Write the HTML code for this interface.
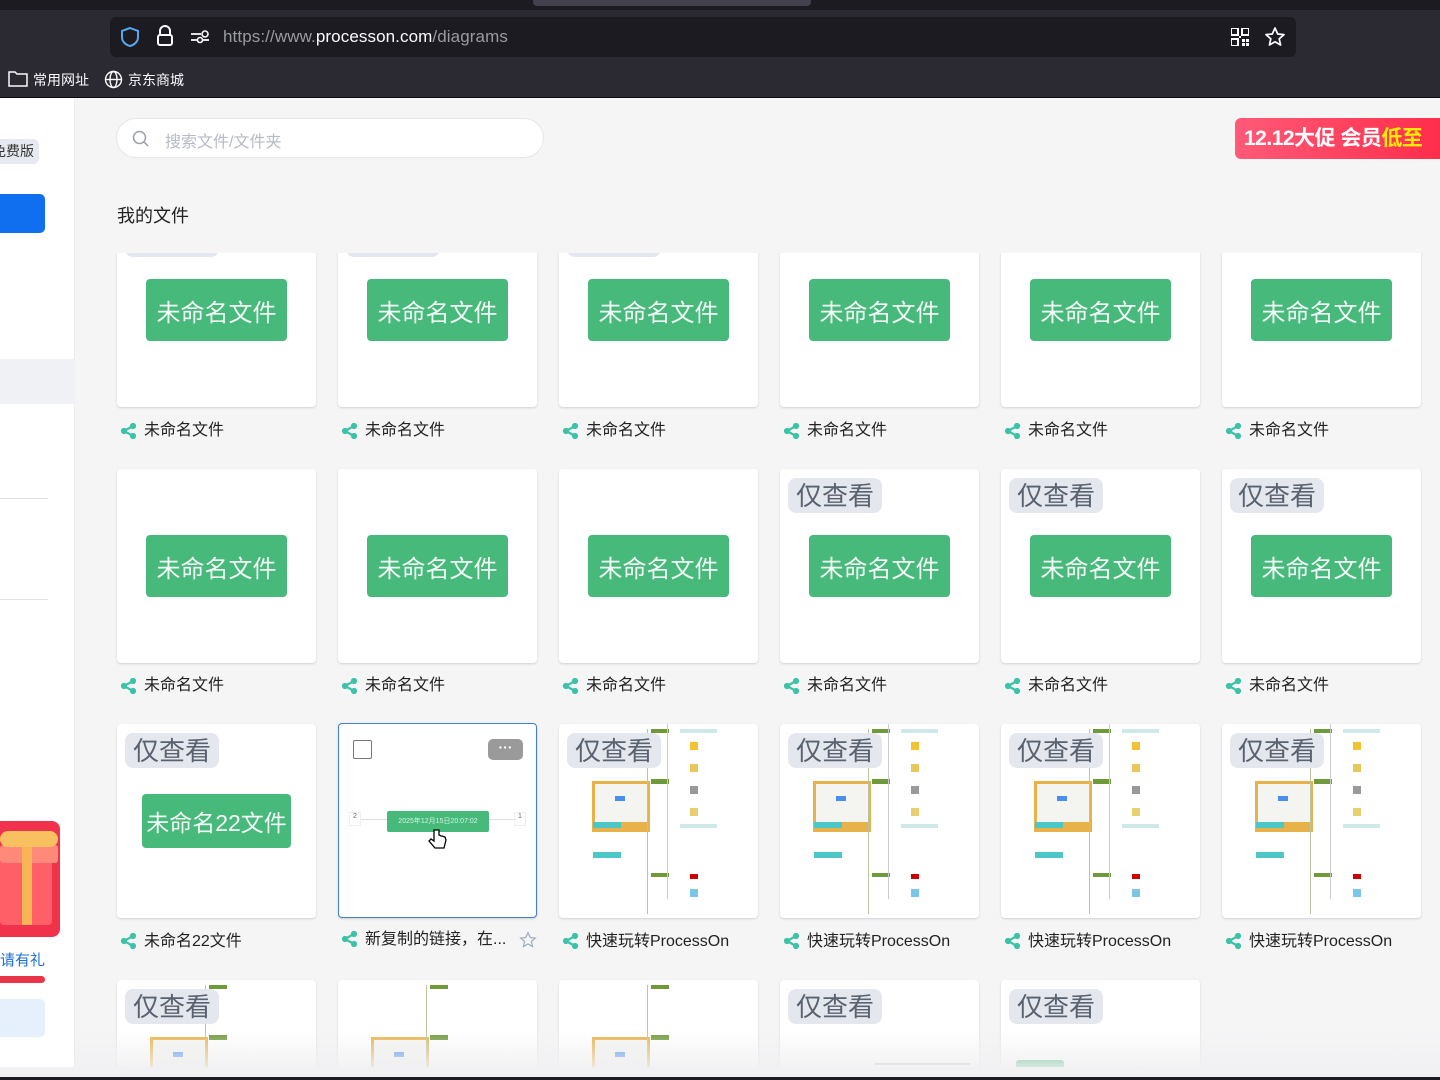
<!DOCTYPE html>
<html><head><meta charset="utf-8">
<style>
*{margin:0;padding:0;box-sizing:border-box}
html,body{width:1440px;height:1080px;overflow:hidden}
body{background:#f5f5f6;font-family:"Liberation Sans","Noto Sans CJK SC",sans-serif;position:relative}
.abs{position:absolute}
.chrome{left:0;top:0;width:1440px;height:98px;background:#2b2a33}
.tabs{left:0;top:0;width:1440px;height:10px;background:#1c1b22}
.tabact{left:533px;top:0;width:278px;height:6px;background:#42414d;border-radius:0 0 4px 4px}
.url{left:110px;top:17px;width:1186px;height:40px;background:#1c1b22;border-radius:6px}
.urltxt{left:223px;top:27px;font-size:17px;color:#9a9aa2;letter-spacing:.1px}
.urltxt b{font-weight:normal;color:#fbfbfe}
.bm{top:70px;font-size:14px;color:#fbfbfe}
.sep{left:0;top:97px;width:1440px;height:1px;background:#0c0c0d}
.side{left:0;top:98px;width:75px;height:982px;background:#fff;border-right:1px solid #ececef}
.card{position:absolute;width:199px;height:194px;background:#fff;border-radius:4px;box-shadow:0 1px 2px rgba(0,0,0,.15);overflow:hidden}
.btn{position:absolute;left:29px;top:66px;width:141px;height:62px;background:#47b97b;border-radius:4px;font-size:24px;text-align:center;line-height:70px;color:#f2fbf6}
.tag{position:absolute;z-index:3;left:8px;top:9px;width:94px;height:35px;background:#e4e8ee;border-radius:8px;color:#5a6270;font-size:26px;text-align:center;line-height:37px}
.lbl{position:absolute;font-size:16px;color:#222;height:20px;line-height:20px}
.grid{left:100px;top:253px;width:1340px;height:814px;overflow:hidden}
.mm::before{content:"";position:absolute;left:33px;top:57px;width:52px;height:38px;background:#f4f4f0 linear-gradient(#4a8ef0,#4a8ef0) 20px 12px/10px 5px no-repeat;border:3px solid #e8b24a;border-bottom-width:10px}
.mm::after{content:"";position:absolute;left:88px;top:5px;width:22px;height:185px;border-left:1px solid #b9c5a0;background:linear-gradient(#6f9a3a,#6f9a3a) 3px 0/18px 4px no-repeat,linear-gradient(#6f9a3a,#6f9a3a) 3px 50px/18px 5px no-repeat,linear-gradient(#6f9a3a,#6f9a3a) 3px 144px/18px 4px no-repeat}
.mmx{position:absolute;left:108px;top:15px;width:50px;height:175px;border-left:1px solid #ccc;background:
linear-gradient(#f2c230,#f2c230) 22px 18px/8px 8px no-repeat,
linear-gradient(#e8c85a,#e8c85a) 22px 40px/8px 8px no-repeat,
linear-gradient(#999,#999) 22px 62px/8px 8px no-repeat,
linear-gradient(#e8d070,#e8d070) 22px 84px/8px 8px no-repeat,
linear-gradient(#c00,#c00) 22px 150px/8px 5px no-repeat,
linear-gradient(#7bc5e8,#7bc5e8) 22px 165px/8px 8px no-repeat,
linear-gradient(#cfe8ea,#cfe8ea) 12px 5px/38px 4px no-repeat,
linear-gradient(#cfe8ea,#cfe8ea) 12px 100px/38px 4px no-repeat;}
</style></head><body>
<div class="abs chrome"></div>
<div class="abs tabs"></div>
<div class="abs tabact"></div>
<div class="abs url"></div>
<svg class="abs" style="left:119px;top:26px" width="22" height="22" viewBox="0 0 22 22"><path d="M11 2 L19 5 V11 C19 16 15 19 11 20 C7 19 3 16 3 11 V5 Z" fill="none" stroke="#56a9f0" stroke-width="2"/></svg>
<svg class="abs" style="left:156px;top:25px" width="18" height="22" viewBox="0 0 18 22"><path d="M4 10 V6 a5 5 0 0 1 10 0 V10" fill="none" stroke="#fbfbfe" stroke-width="2"/><rect x="2" y="10" width="14" height="10" rx="2" fill="none" stroke="#fbfbfe" stroke-width="2"/></svg>
<svg class="abs" style="left:190px;top:29px" width="20" height="16" viewBox="0 0 20 16"><path d="M1 5h10M1 11h6" stroke="#fbfbfe" stroke-width="1.8"/><circle cx="15" cy="5" r="3" fill="none" stroke="#fbfbfe" stroke-width="1.6"/><circle cx="10" cy="11" r="2.5" fill="none" stroke="#fbfbfe" stroke-width="1.6"/><path d="M13 11h6" stroke="#fbfbfe" stroke-width="1.8"/></svg>
<div class="abs urltxt">https://www.<b>processon.com</b>/diagrams</div>
<svg class="abs" style="left:1231px;top:28px" width="18" height="18" viewBox="0 0 18 18" fill="#fbfbfe"><rect x="0" y="0" width="7" height="7" fill="none" stroke="#fbfbfe" stroke-width="2"/><rect x="11" y="0" width="7" height="7" fill="none" stroke="#fbfbfe" stroke-width="2"/><rect x="0" y="11" width="7" height="7" fill="none" stroke="#fbfbfe" stroke-width="2"/><rect x="11" y="11" width="3" height="3"/><rect x="15" y="15" width="3" height="3"/><rect x="11" y="15" width="3" height="3"/><rect x="15" y="11" width="3" height="3"/><rect x="8" y="8" width="2" height="2"/></svg>
<svg class="abs" style="left:1264px;top:26px" width="22" height="22" viewBox="0 0 22 22"><path d="M11 2 L13.7 8 L20 8.6 L15.2 12.8 L16.6 19 L11 15.8 L5.4 19 L6.8 12.8 L2 8.6 L8.3 8 Z" fill="none" stroke="#fbfbfe" stroke-width="1.7" stroke-linejoin="round"/></svg>
<svg class="abs" style="left:8px;top:70px" width="20" height="17" viewBox="0 0 20 17"><path d="M1 2h6l2 2h10v12H1z" fill="none" stroke="#fbfbfe" stroke-width="1.5"/></svg>
<div class="abs bm" style="left:33px">常用网址</div>
<svg class="abs" style="left:104px;top:70px" width="19" height="19" viewBox="0 0 19 19" fill="none" stroke="#fbfbfe" stroke-width="1.4"><circle cx="9.5" cy="9.5" r="8"/><ellipse cx="9.5" cy="9.5" rx="3.5" ry="8"/><path d="M1.5 9.5h16"/></svg>
<div class="abs bm" style="left:128px">京东商城</div>
<div class="abs sep"></div>

<div class="abs side"></div>
<div class="abs" style="left:-10px;top:139px;width:49px;height:25px;background:#e6eaf0;border-radius:6px;font-size:14px;color:#333;line-height:25px;text-align:right;padding-right:5px">免费版</div>
<div class="abs" style="left:0;top:194px;width:45px;height:39px;background:#0f6fef;border-radius:0 5px 5px 0"></div>
<div class="abs" style="left:0;top:359px;width:75px;height:45px;background:#f0f1f4"></div>
<div class="abs" style="left:0;top:498px;width:48px;height:1px;background:#e2e2e6"></div>
<div class="abs" style="left:0;top:599px;width:48px;height:1px;background:#e2e2e6"></div>
<div class="abs" style="left:0;top:821px;width:60px;height:116px;background:#f0324d;border-radius:0 8px 8px 0;overflow:hidden">
<div class="abs" style="left:0;top:38px;width:52px;height:66px;background:#ff6068;border-radius:4px"></div>
<div class="abs" style="left:0;top:24px;width:58px;height:18px;background:#ff8a7a;border-radius:3px"></div>
<div class="abs" style="left:22px;top:24px;width:10px;height:80px;background:#f7b555"></div>
<div class="abs" style="left:0;top:10px;width:58px;height:16px;background:#f9c060;border-radius:8px"></div>
</div>
<div class="abs" style="left:0;top:949px;font-size:15px;color:#1a6fd8">请有礼</div>
<div class="abs" style="left:0;top:976px;width:45px;height:7px;background:#e8354a;border-radius:0 4px 4px 0"></div>
<div class="abs" style="left:0;top:999px;width:45px;height:38px;background:#e5f0fc;border-radius:0 5px 5px 0"></div>

<div class="abs" style="left:116px;top:118px;width:428px;height:40px;background:#fff;border:1px solid #e6e6ea;border-radius:20px"></div>
<svg class="abs" style="left:132px;top:130px" width="17" height="17" viewBox="0 0 17 17" fill="none" stroke="#9aa0a8" stroke-width="1.5"><circle cx="7.5" cy="7.5" r="6"/><path d="M12 12l4 4"/></svg>
<div class="abs" style="left:165px;top:128px;font-size:16px;color:#b6bac4">搜索文件/文件夹</div>
<div class="abs" style="left:1235px;top:118px;width:220px;height:41px;background:linear-gradient(90deg,#ff5a78,#ff2a48);border-radius:6px;color:#fff;font-size:21px;font-weight:bold;line-height:41px;padding-left:9px;white-space:nowrap;letter-spacing:-0.5px">12.12大促 会员<span style="color:#ffec00">低至</span></div>
<div class="abs" style="left:117px;top:202px;font-size:18px;color:#222">我的文件</div>

<div class="abs grid">
<div class="card" style="left:17px;top:-40px"><div class="tag"></div><div class="btn">未命名文件</div></div>
<div class="card" style="left:238px;top:-40px"><div class="tag"></div><div class="btn">未命名文件</div></div>
<div class="card" style="left:459px;top:-40px"><div class="tag"></div><div class="btn">未命名文件</div></div>
<div class="card" style="left:680px;top:-40px"><div class="btn">未命名文件</div></div>
<div class="card" style="left:901px;top:-40px"><div class="btn">未命名文件</div></div>
<div class="card" style="left:1122px;top:-40px"><div class="btn">未命名文件</div></div>
<div class="card" style="left:17px;top:216px"><div class="btn">未命名文件</div></div>
<div class="card" style="left:238px;top:216px"><div class="btn">未命名文件</div></div>
<div class="card" style="left:459px;top:216px"><div class="btn">未命名文件</div></div>
<div class="card" style="left:680px;top:216px"><div class="tag">仅查看</div><div class="btn">未命名文件</div></div>
<div class="card" style="left:901px;top:216px"><div class="tag">仅查看</div><div class="btn">未命名文件</div></div>
<div class="card" style="left:1122px;top:216px"><div class="tag">仅查看</div><div class="btn">未命名文件</div></div>
<div class="card" style="left:17px;top:471px"><div class="tag">仅查看</div><div class="btn" style="left:25px;top:70px;width:149px;height:54px;line-height:58px;font-size:23px">未命名22文件</div></div>
<div class="card" style="left:238px;top:470px;height:195px;border:1.5px solid #3f7fd6">
<div class="abs" style="left:14px;top:16px;width:19px;height:19px;border:1.5px solid #777;border-radius:2px"></div>
<div class="abs" style="left:149px;top:15px;width:35px;height:21px;background:#9a9a9a;border-radius:5px;color:#fff;font-size:14px;line-height:16px;text-align:center;font-weight:bold">···</div>
<div class="abs" style="left:10px;top:88px;width:12px;height:14px;border:1px solid #eee;font-size:7px;color:#666;text-align:center">2</div>
<div class="abs" style="left:22px;top:95px;width:155px;height:1px;background:#ddd"></div>
<div class="abs" style="left:48px;top:87px;width:102px;height:21px;background:#47b97b;border-radius:2px;color:#d8f2e4;font-size:7px;line-height:21px;text-align:center">2025年12月15日20:07:02</div>
<div class="abs" style="left:175px;top:88px;width:12px;height:14px;border:1px solid #eee;font-size:7px;color:#666;text-align:center">1</div>
<svg class="abs" style="left:89px;top:104px" width="20" height="22" viewBox="0 0 20 22"><path d="M6 2v11l-3-2-2 2 6 7h9l2-8-1-3-3-1-1 0-2-1V2z" fill="#fff" stroke="#000" stroke-width="1.3"/></svg>
</div>
<div class="card mm" style="left:459px;top:471px"><div class="tag">仅查看</div></div>
<div class="card mm" style="left:680px;top:471px"><div class="tag">仅查看</div></div>
<div class="card mm" style="left:901px;top:471px"><div class="tag">仅查看</div></div>
<div class="card mm" style="left:1122px;top:471px"><div class="tag">仅查看</div></div>
<div class="card mm" style="left:17px;top:727px"><div class="tag">仅查看</div></div>
<div class="card mm" style="left:238px;top:727px"></div>
<div class="card mm" style="left:459px;top:727px"></div>
<div class="card" style="left:680px;top:727px"><div class="tag">仅查看</div><div class="abs" style="left:95px;top:83px;width:95px;height:2px;background:#bbb"></div></div>
<div class="card" style="left:901px;top:727px"><div class="tag">仅查看</div><div class="abs" style="left:15px;top:80px;width:48px;height:10px;background:#47b97b;border-radius:3px"></div></div>
</div>

<div class="lbl" style="left:144px;top:421px">未命名文件</div>
<div class="lbl" style="left:365px;top:421px">未命名文件</div>
<div class="lbl" style="left:586px;top:421px">未命名文件</div>
<div class="lbl" style="left:807px;top:421px">未命名文件</div>
<div class="lbl" style="left:1028px;top:421px">未命名文件</div>
<div class="lbl" style="left:1249px;top:421px">未命名文件</div>
<div class="lbl" style="left:144px;top:676px">未命名文件</div>
<div class="lbl" style="left:365px;top:676px">未命名文件</div>
<div class="lbl" style="left:586px;top:676px">未命名文件</div>
<div class="lbl" style="left:807px;top:676px">未命名文件</div>
<div class="lbl" style="left:1028px;top:676px">未命名文件</div>
<div class="lbl" style="left:1249px;top:676px">未命名文件</div>
<div class="lbl" style="left:144px;top:932px">未命名22文件</div>
<div class="lbl" style="left:365px;top:930px">新复制的链接，在...</div>
<div class="lbl" style="left:586px;top:932px">快速玩转ProcessOn</div>
<div class="lbl" style="left:807px;top:932px">快速玩转ProcessOn</div>
<div class="lbl" style="left:1028px;top:932px">快速玩转ProcessOn</div>
<div class="lbl" style="left:1249px;top:932px">快速玩转ProcessOn</div>
<svg class="abs" style="left:519px;top:931px" width="18" height="18" viewBox="0 0 22 22"><path d="M11 2 L13.7 8 L20 8.6 L15.2 12.8 L16.6 19 L11 15.8 L5.4 19 L6.8 12.8 L2 8.6 L8.3 8 Z" fill="none" stroke="#9ab" stroke-width="1.4"/></svg>

<div class="mmx" style="left:667px;top:724px"></div><div class="mmx" style="left:888px;top:724px"></div><div class="mmx" style="left:1109px;top:724px"></div><div class="mmx" style="left:1330px;top:724px"></div>
<div class="abs" style="left:593px;top:822px;width:28px;height:6px;background:#4cc6c6"></div><div class="abs" style="left:814px;top:822px;width:28px;height:6px;background:#4cc6c6"></div><div class="abs" style="left:1035px;top:822px;width:28px;height:6px;background:#4cc6c6"></div><div class="abs" style="left:1256px;top:822px;width:28px;height:6px;background:#4cc6c6"></div>
<div class="abs" style="left:593px;top:852px;width:28px;height:6px;background:#4cc6c6"></div><div class="abs" style="left:814px;top:852px;width:28px;height:6px;background:#4cc6c6"></div><div class="abs" style="left:1035px;top:852px;width:28px;height:6px;background:#4cc6c6"></div><div class="abs" style="left:1256px;top:852px;width:28px;height:6px;background:#4cc6c6"></div>

<svg width="0" height="0" style="position:absolute;left:0;top:0"><defs><g id="sh" fill="none" stroke="#3cc2a7" stroke-width="2.2"><path d="M14 3 L5 8 L14 13"/><circle cx="14" cy="3" r="2" fill="#3cc2a7"/><circle cx="5" cy="8" r="2" fill="#3cc2a7"/><circle cx="14" cy="13" r="2" fill="#3cc2a7"/></g></defs></svg>
<svg class="abs" style="left:119px;top:423px" width="18" height="16"><use href="#sh"/></svg>
<svg class="abs" style="left:340px;top:423px" width="18" height="16"><use href="#sh"/></svg>
<svg class="abs" style="left:561px;top:423px" width="18" height="16"><use href="#sh"/></svg>
<svg class="abs" style="left:782px;top:423px" width="18" height="16"><use href="#sh"/></svg>
<svg class="abs" style="left:1003px;top:423px" width="18" height="16"><use href="#sh"/></svg>
<svg class="abs" style="left:1224px;top:423px" width="18" height="16"><use href="#sh"/></svg>
<svg class="abs" style="left:119px;top:678px" width="18" height="16"><use href="#sh"/></svg>
<svg class="abs" style="left:340px;top:678px" width="18" height="16"><use href="#sh"/></svg>
<svg class="abs" style="left:561px;top:678px" width="18" height="16"><use href="#sh"/></svg>
<svg class="abs" style="left:782px;top:678px" width="18" height="16"><use href="#sh"/></svg>
<svg class="abs" style="left:1003px;top:678px" width="18" height="16"><use href="#sh"/></svg>
<svg class="abs" style="left:1224px;top:678px" width="18" height="16"><use href="#sh"/></svg>
<svg class="abs" style="left:119px;top:933px" width="18" height="16"><use href="#sh"/></svg>
<svg class="abs" style="left:340px;top:931px" width="18" height="16"><use href="#sh"/></svg>
<svg class="abs" style="left:561px;top:933px" width="18" height="16"><use href="#sh"/></svg>
<svg class="abs" style="left:782px;top:933px" width="18" height="16"><use href="#sh"/></svg>
<svg class="abs" style="left:1003px;top:933px" width="18" height="16"><use href="#sh"/></svg>
<svg class="abs" style="left:1224px;top:933px" width="18" height="16"><use href="#sh"/></svg>

<div class="abs" style="left:75px;top:1030px;width:1365px;height:40px;background:linear-gradient(rgba(245,245,246,0),rgba(240,240,242,.9))"></div>
<div class="abs" style="left:0;top:1067px;width:1440px;height:10px;background:#f1f1f3"></div>
<div class="abs" style="left:0;top:1077px;width:1440px;height:3px;background:#1c1b22"></div>
</body></html>
